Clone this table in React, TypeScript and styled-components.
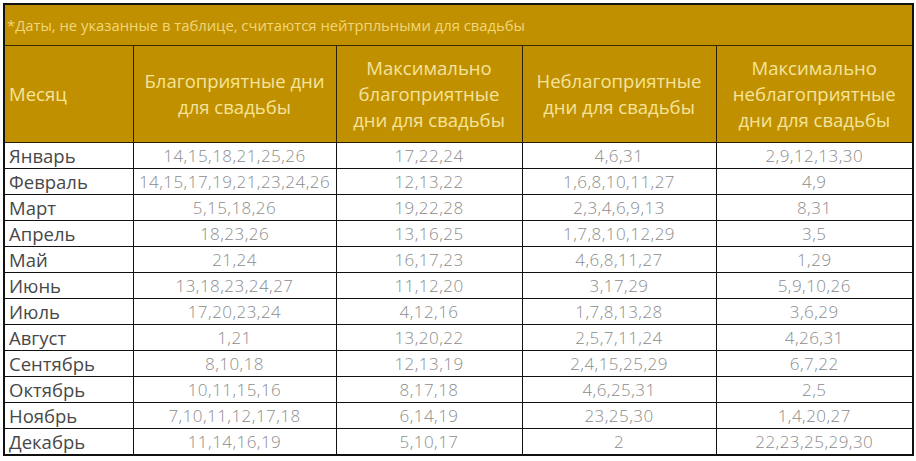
import React from 'react'
import styled, { createGlobalStyle } from 'styled-components'

const GlobalStyle = createGlobalStyle`
  html, body {
    margin: 0;
    padding: 0;
    background: #ffffff;
  }
`

const Page = styled.div`
  width: 916px;
  height: 461px;
  padding: 3px 0 0 3px;
  box-sizing: border-box;
  background: #ffffff;
  font-family: 'Open Sans', 'Liberation Sans', sans-serif;
`

const Table = styled.table`
  width: 909px;
  border-collapse: collapse;
  table-layout: fixed;
  border: 2px solid #111;
`

const NoteCell = styled.td`
  height: 40px;
  padding: 0 0 0 2px;
  background: #c09000;
  color: #f2d67a;
  font-size: 14.8px;
  border-bottom: 1px solid #3a2a00;
  white-space: nowrap;
`

const HeadCell = styled.th<{ $left?: boolean }>`
  height: 96px;
  padding: 0 4px;
  background: #c09000;
  color: #f5e49a;
  font-size: 18.5px;
  font-weight: 400;
  line-height: 26px;
  text-align: ${p => (p.$left ? 'left' : 'center')};
  border: 1px solid #2a1e00;
  border-top: none;
  white-space: nowrap;
`

const Row = styled.tr`
  height: 26px;
`

const MonthCell = styled.td`
  padding: 0 0 0 4px;
  color: #484848;
  font-size: 18.5px;
  border: 1px solid #111;
  white-space: nowrap;
`

const DaysCell = styled.td`
  padding: 0;
  color: #8c8c8c;
  font-size: 17px;
  font-weight: 300;
  letter-spacing: 0.45px;
  text-align: center;
  border: 1px solid #111;
  white-space: nowrap;
`

const columns = [
  { w: 129, label: ['Месяц'], left: true },
  { w: 203, label: ['Благоприятные дни', 'для свадьбы'] },
  { w: 186, label: ['Максимально', 'благоприятные', 'дни для свадьбы'] },
  { w: 194, label: ['Неблагоприятные', 'дни для свадьбы'] },
  { w: 197, label: ['Максимально', 'неблагоприятные', 'дни для свадьбы'] },
]

const rows: [string, string, string, string, string][] = [
  ['Январь', '14,15,18,21,25,26', '17,22,24', '4,6,31', '2,9,12,13,30'],
  ['Февраль', '14,15,17,19,21,23,24,26', '12,13,22', '1,6,8,10,11,27', '4,9'],
  ['Март', '5,15,18,26', '19,22,28', '2,3,4,6,9,13', '8,31'],
  ['Апрель', '18,23,26', '13,16,25', '1,7,8,10,12,29', '3,5'],
  ['Май', '21,24', '16,17,23', '4,6,8,11,27', '1,29'],
  ['Июнь', '13,18,23,24,27', '11,12,20', '3,17,29', '5,9,10,26'],
  ['Июль', '17,20,23,24', '4,12,16', '1,7,8,13,28', '3,6,29'],
  ['Август', '1,21', '13,20,22', '2,5,7,11,24', '4,26,31'],
  ['Сентябрь', '8,10,18', '12,13,19', '2,4,15,25,29', '6,7,22'],
  ['Октябрь', '10,11,15,16', '8,17,18', '4,6,25,31', '2,5'],
  ['Ноябрь', '7,10,11,12,17,18', '6,14,19', '23,25,30', '1,4,20,27'],
  ['Декабрь', '11,14,16,19', '5,10,17', '2', '22,23,25,29,30'],
]

export default function App() {
  return (
    <>
      <GlobalStyle />
      <Page>
        <Table>
          <colgroup>
            {columns.map((c, i) => (
              <col key={i} style={{ width: c.w }} />
            ))}
          </colgroup>
          <thead>
            <tr>
              <NoteCell colSpan={5}>
                *Даты, не указанные в таблице, считаются нейтрпльными для свадьбы
              </NoteCell>
            </tr>
            <tr>
              {columns.map((c, i) => (
                <HeadCell key={i} $left={c.left}>
                  {c.label.map((l, j) => (
                    <React.Fragment key={j}>
                      {j > 0 && <br />}
                      {l}
                    </React.Fragment>
                  ))}
                </HeadCell>
              ))}
            </tr>
          </thead>
          <tbody>
            {rows.map(r => (
              <Row key={r[0]}>
                <MonthCell>{r[0]}</MonthCell>
                <DaysCell>{r[1]}</DaysCell>
                <DaysCell>{r[2]}</DaysCell>
                <DaysCell>{r[3]}</DaysCell>
                <DaysCell>{r[4]}</DaysCell>
              </Row>
            ))}
          </tbody>
        </Table>
      </Page>
    </>
  )
}
